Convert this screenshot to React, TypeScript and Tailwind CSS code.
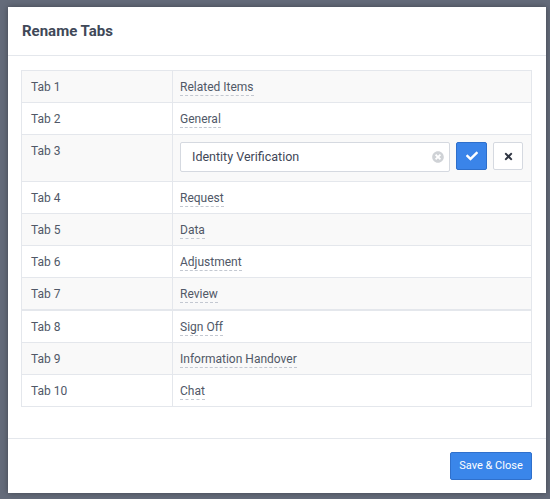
import { FaCheck, FaTimes, FaTimesCircle } from 'react-icons/fa'

const tabs = [
  'Related Items',
  'General',
  'Identity Verification',
  'Request',
  'Data',
  'Adjustment',
  'Review',
  'Sign Off',
  'Information Handover',
  'Chat',
]

function EditRow({ label, value }: { label: string; value: string }) {
  return (
    <div className="grid grid-cols-[151px_1fr] h-[47px] border-b border-[#e4e7ec] bg-[#f9f9f9]">
      <div className="border-r border-[#e4e7ec] pl-[9px] pt-[9px] leading-[15px]">{label}</div>
      <div className="flex items-start gap-[6px] pl-[7px] pr-[8px] pt-[7px]">
        <div className="relative flex-1 h-[30px] bg-white border border-[#d5d9e0] rounded-[2px] flex items-center pl-[11px] text-[12.5px] text-[#3f4757]">
          {value}
          <FaTimesCircle className="absolute right-[5px] top-[8px] w-[12px] h-[12px] text-[#cfd2d6]" />
        </div>
        <button className="w-[31px] h-[28px] bg-[#3a84e9] border border-[#2e6fcb] rounded-[2px] flex items-center justify-center">
          <FaCheck className="w-[12px] h-[12px] text-white" />
        </button>
        <button className="w-[30px] h-[28px] bg-white border border-[#d5d9e0] rounded-[2px] flex items-center justify-center">
          <FaTimes className="w-[11px] h-[11px] text-[#2f3542]" />
        </button>
      </div>
    </div>
  )
}

export default function App() {
  return (
    <div className="w-[550px] h-[499px] bg-[#646b7a] pt-[7px] pl-[8px] font-['Roboto',sans-serif] overflow-hidden">
      <div className="w-[538px] h-[486px] bg-white shadow-[0_0_6px_rgba(0,0,0,0.35)] flex flex-col">
        {/* Header */}
        <div className="h-[49px] border-b border-[#e4e7ec] flex items-center pl-[14px]">
          <h2 className="text-[15px] font-bold text-[#404858]">Rename Tabs</h2>
        </div>

        {/* Body */}
        <div className="pt-[14px] pb-[31px] pl-[13px] pr-[14px]">
          <div className="border-t border-x border-[#e4e7ec] text-[12px] text-[#505867]">
            {tabs.map((name, i) =>
              i === 2 ? (
                <EditRow key={i} label={`Tab ${i + 1}`} value={name} />
              ) : (
                <div
                  key={i}
                  className={`grid grid-cols-[151px_1fr] border-[#e4e7ec] ${
                    i === 6 ? 'h-[33px] border-b-2' : 'h-[32px] border-b'
                  } ${i % 2 === 0 ? 'bg-[#f9f9f9]' : 'bg-white'}`}
                >
                  <div className="border-r border-[#e4e7ec] pl-[9px] flex items-center">Tab {i + 1}</div>
                  <div className="pl-[7px] flex items-center">
                    <span className="inline-block leading-[15px] pt-[2px] border-b border-dashed border-[#c3c8d1]">
                      {name}
                    </span>
                  </div>
                </div>
              )
            )}
          </div>
        </div>

        {/* Footer */}
        <div className="border-t border-[#e4e7ec] flex-1 flex justify-end items-start pt-[13px] pr-[14px]">
          <button className="h-[28px] w-[82px] bg-[#3a86ea] border border-[#2f70cc] rounded-[2px] text-white text-[11px]">
            Save &amp; Close
          </button>
        </div>
      </div>
    </div>
  )
}
